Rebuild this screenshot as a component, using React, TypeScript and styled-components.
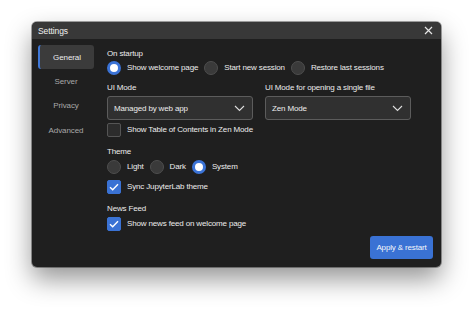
import React from 'react';
import styled, { createGlobalStyle, css } from 'styled-components';

const GlobalStyle = createGlobalStyle`
  html, body {
    margin: 0;
    padding: 0;
    background: #ffffff;
  }
  body {
    font-family: "Liberation Sans", Arial, sans-serif;
    -webkit-font-smoothing: antialiased;
  }
`;

const Page = styled.div`
  width: 474px;
  height: 311px;
  padding: 22px 33px 0 32px;
  box-sizing: border-box;
`;

const Window = styled.div`
  width: 409px;
  height: 245px;
  display: flex;
  flex-direction: column;
  background: #1f1f1f;
  border-radius: 5px;
  overflow: hidden;
  box-shadow: 0 12px 26px rgba(0, 0, 0, 0.42), 0 0 0 1px rgba(0, 0, 0, 0.35);
`;

const TitleBar = styled.div`
  height: 17px;
  flex: none;
  display: flex;
  align-items: center;
  justify-content: space-between;
  padding: 0 8px 0 6px;
  background: #383838;
  color: #f0f0f0;
  font-size: 8.5px;
  letter-spacing: -0.1px;
`;

const CloseButton = styled.button`
  border: none;
  background: none;
  padding: 0;
  width: 10px;
  height: 10px;
  display: flex;
  align-items: center;
  justify-content: center;
  cursor: pointer;
`;

const Body = styled.div`
  flex: 1;
  display: flex;
  min-height: 0;
`;

const Sidebar = styled.nav`
  width: 75px;
  flex: none;
  display: flex;
  flex-direction: column;
  gap: 0.4px;
  padding: 6px 0 0 6px;
  box-sizing: border-box;
`;

const Tab = styled.div<{ active?: boolean }>`
  width: 56px;
  height: 24px;
  display: flex;
  align-items: center;
  justify-content: center;
  box-sizing: border-box;
  font-size: 8px;
  letter-spacing: -0.1px;
  color: #a8a8a8;
  border-radius: 3px;
  ${(props) =>
    props.active &&
    css`
      background: #3b3b3b;
      color: #ececec;
      border-left: 2px solid #3f78d8;
    `}
`;

const Content = styled.div`
  flex: 1;
  display: flex;
  flex-direction: column;
  padding: 9px 8px 8px 0;
  color: #ececec;
  font-size: 8px;
  letter-spacing: -0.15px;
`;

const Section = styled.div<{ gap?: number; top?: number }>`
  display: flex;
  flex-direction: column;
  gap: ${(props) => props.gap ?? 3}px;
  margin-top: ${(props) => props.top ?? 0}px;
`;

const Label = styled.div`
  height: 11px;
  line-height: 11px;
`;

const OptionRow = styled.div`
  display: flex;
  align-items: center;
  gap: 6px;
  height: 14px;
`;

const Option = styled.label`
  display: flex;
  align-items: center;
  gap: 6px;
  line-height: 14px;
`;

const Radio = styled.span<{ checked?: boolean }>`
  width: 14px;
  height: 14px;
  border-radius: 50%;
  box-sizing: border-box;
  flex: none;
  background: #3a3a3a;
  border: 1px solid #4e4e4e;
  ${(props) =>
    props.checked &&
    css`
      background: #ffffff;
      border: 3.5px solid #3b73d6;
    `}
`;

const Box = styled.span<{ checked?: boolean }>`
  width: 14px;
  height: 14px;
  border-radius: 2px;
  box-sizing: border-box;
  flex: none;
  display: flex;
  align-items: center;
  justify-content: center;
  background: #2c2c2c;
  border: 1px solid #555555;
  ${(props) =>
    props.checked &&
    css`
      background: #3a72d4;
      border-color: #3a72d4;
    `}
`;

const SelectGrid = styled.div`
  display: grid;
  grid-template-columns: 146px 146px;
  column-gap: 12px;
  margin-top: 7px;
`;

const Field = styled.div`
  display: flex;
  flex-direction: column;
  gap: 3px;
`;

const Select = styled.div`
  height: 24px;
  box-sizing: border-box;
  display: flex;
  align-items: center;
  justify-content: space-between;
  padding: 0 7px 0 6px;
  background: #303030;
  border: 1px solid #5c5c5c;
  border-radius: 3px;
  color: #ededed;
`;

const Footer = styled.div`
  margin-top: auto;
  display: flex;
  justify-content: flex-end;
`;

const PrimaryButton = styled.button`
  height: 23px;
  width: 63px;
  padding: 0;
  border: none;
  border-radius: 3px;
  background: #3a72d4;
  color: #f4f6fb;
  font-family: inherit;
  font-size: 8px;
  letter-spacing: -0.15px;
  white-space: nowrap;
`;

const Chevron = () => (
  <svg width="11" height="7" viewBox="0 0 11 7" fill="none">
    <path d="M1 1l4.5 4.5L10 1" stroke="#dcdcdc" strokeWidth="1.1" />
  </svg>
);

const Check = () => (
  <svg width="10" height="8" viewBox="0 0 10 8" fill="none">
    <path d="M1 4.2l2.7 2.6L9 1.2" stroke="#ffffff" strokeWidth="1.4" />
  </svg>
);

const RadioOption: React.FC<{ label: string; checked?: boolean }> = ({ label, checked }) => (
  <Option>
    <Radio checked={checked} />
    {label}
  </Option>
);

const CheckOption: React.FC<{ label: string; checked?: boolean }> = ({ label, checked }) => (
  <Option>
    <Box checked={checked}>{checked && <Check />}</Box>
    {label}
  </Option>
);

const App: React.FC = () => {
  return (
    <>
      <GlobalStyle />
      <Page>
        <Window>
          <TitleBar>
            <span>Settings</span>
            <CloseButton aria-label="Close">
              <svg width="9" height="9" viewBox="0 0 9 9">
                <path d="M1 1l7 7M8 1L1 8" stroke="#e6e6e6" strokeWidth="1.2" />
              </svg>
            </CloseButton>
          </TitleBar>
          <Body>
            <Sidebar>
              <Tab active>General</Tab>
              <Tab>Server</Tab>
              <Tab>Privacy</Tab>
              <Tab>Advanced</Tab>
            </Sidebar>
            <Content>
              <Section gap={2}>
                <Label>On startup</Label>
                <OptionRow>
                  <RadioOption label="Show welcome page" checked />
                  <RadioOption label="Start new session" />
                  <RadioOption label="Restore last sessions" />
                </OptionRow>
              </Section>
              <SelectGrid>
                <Field>
                  <Label>UI Mode</Label>
                  <Select>
                    <span>Managed by web app</span>
                    <Chevron />
                  </Select>
                </Field>
                <Field>
                  <Label>UI Mode for opening a single file</Label>
                  <Select>
                    <span>Zen Mode</span>
                    <Chevron />
                  </Select>
                </Field>
              </SelectGrid>
              <Section top={3}>
                <CheckOption label="Show Table of Contents in Zen Mode" />
              </Section>
              <Section top={9} gap={3}>
                <Label>Theme</Label>
                <OptionRow>
                  <RadioOption label="Light" />
                  <RadioOption label="Dark" />
                  <RadioOption label="System" checked />
                </OptionRow>
                <Section top={3}>
                  <CheckOption label="Sync JupyterLab theme" checked />
                </Section>
              </Section>
              <Section top={9} gap={3}>
                <Label>News Feed</Label>
                <CheckOption label="Show news feed on welcome page" checked />
              </Section>
              <Footer>
                <PrimaryButton>Apply &amp; restart</PrimaryButton>
              </Footer>
            </Content>
          </Body>
        </Window>
      </Page>
    </>
  );
};

export default App;
